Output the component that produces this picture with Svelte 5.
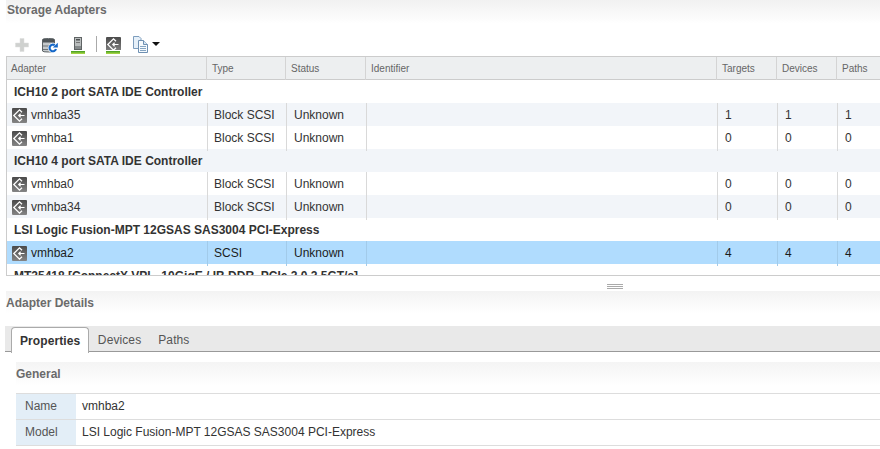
<script>
	const columns = [
		{ label: 'Adapter', width: 201 },
		{ label: 'Type', width: 79 },
		{ label: 'Status', width: 80 },
		{ label: 'Identifier', width: 351 },
		{ label: 'Targets', width: 60 },
		{ label: 'Devices', width: 60 },
		{ label: 'Paths', width: 60 }
	];

	const rows = [
		{ group: 'ICH10 2 port SATA IDE Controller' },
		{ name: 'vmhba35', type: 'Block SCSI', count: 1 },
		{ name: 'vmhba1', type: 'Block SCSI', count: 0 },
		{ group: 'ICH10 4 port SATA IDE Controller' },
		{ name: 'vmhba0', type: 'Block SCSI', count: 0 },
		{ name: 'vmhba34', type: 'Block SCSI', count: 0 },
		{ group: 'LSI Logic Fusion-MPT 12GSAS SAS3004 PCI-Express' },
		{ name: 'vmhba2', type: 'SCSI', count: 4, selected: true },
		{ group: 'MT25418 [ConnectX VPI - 10GigE / IB DDR, PCIe 2.0 2.5GT/s]' }
	];

	const tabs = ['Properties', 'Devices', 'Paths'];
	const gridColumns = columns.map((c) => c.width + 'px').join(' ');
	// header separators sit one pixel left of the row separators
	const headColumns = columns.map((c, i) => (i === 0 ? c.width - 1 : c.width) + 'px').join(' ');
</script>

{#snippet adapterIcon()}
	<svg class="adapter-icon" width="15" height="15" viewBox="0 0 15 15">
		<defs>
			<linearGradient id="chip" x1="0" y1="0" x2="0" y2="1">
				<stop offset="0" stop-color="#4a4a4a" />
				<stop offset="1" stop-color="#858585" />
			</linearGradient>
		</defs>
		<rect width="15" height="15" rx="1" fill="url(#chip)" />
		<path d="M10 4.200 L7.500 1.800 L1.800 7.500 L7.500 13.200 L10 10.800" fill="none" stroke="#fff" stroke-width="1.300" />
		<path d="M8.600 5.800 L6.800 7.500 L8.600 9.200 M7 7.500 H12.500" fill="none" stroke="#fff" stroke-width="1.200" />
	</svg>
{/snippet}

<div class="page">
	<h2 class="band">Storage Adapters</h2>

	<div class="toolbar">
		<svg class="plus" width="14" height="14" viewBox="0 0 14 14">
			<path d="M5 0.500h4v4.500h4.500v4h-4.500v4.500h-4v-4.500h-4.500v-4h4.500z" fill="#cfd1cf" stroke="#dcdedc" stroke-width="0.500" />
		</svg>
		<svg class="refresh" width="16" height="15" viewBox="0 0 16 15">
			<path d="M0.500 1.500 Q0.500 0.500 6.500 0.500 Q12.500 0.500 12.500 1.500 V13 Q12.500 14 6.500 14 Q0.500 14 0.500 13z" fill="#c4c8ca" stroke="#5c6265" />
			<rect x="1" y="1" width="11" height="3.500" fill="#4f5558" />
			<path d="M1 8h11M1 11.500h7" stroke="#6f7578" />
			<circle cx="11" cy="10" r="5" fill="#fff" />
			<path d="M14 11a3.300 3.300 0 1 1-1.300-3.800" fill="none" stroke="#1668c8" stroke-width="2.200" />
			<path d="M10.800 9.500h5v-4.800z" fill="#1668c8" />
		</svg>
		<span class="status-tool server">
			<svg width="8" height="13" viewBox="0 0 8 13">
				<rect x="0.500" y="0.500" width="7" height="12" fill="#b9bdbd" stroke="#5f6364" />
				<rect x="2" y="2" width="4" height="1.500" fill="#4d5152" />
				<rect x="2" y="5" width="4" height="1" fill="#777" />
				<rect x="1" y="9" width="6" height="3" fill="#858a8b" />
			</svg>
			<i class="green"></i>
		</span>
		<span class="divider"></span>
		<span class="status-tool chip">
			<span class="chip-box">{@render adapterIcon()}</span>
			<i class="green"></i>
		</span>
		<svg class="docs" width="15" height="17" viewBox="0 0 15 17">
			<path d="M0.500 0.500h5.500l2 2v10h-7.500z" fill="#e6f0f9" stroke="#7d9dbd" />
			<path d="M5.500 4.500h5l4 4v8h-9z" fill="#f6fafd" stroke="#6f90b2" />
			<path d="M10.500 4.500v4h4" fill="#d6e6f3" stroke="#6f90b2" />
			<path d="M7 10.500h6M7 12.500h6M7 14.500h6" stroke="#86a5c2" />
		</svg>
		<span class="caret"></span>
	</div>

	<div class="table">
		<div class="head" style="grid-template-columns: {headColumns}">
			{#each columns as col}
				<div class="head-cell">{col.label}</div>
			{/each}
		</div>

		{#each rows as row, i}
			{#if row.group}
				<div class="group" class:odd={i % 2 === 1}>{row.group}</div>
			{:else}
				<div class="row" class:odd={i % 2 === 1} class:selected={row.selected} style="grid-template-columns: {gridColumns}">
					<div class="cell adapter">
						{@render adapterIcon()}
						<span>{row.name}</span>
					</div>
					<div class="cell type">{row.type}</div>
					<div class="cell">Unknown</div>
					<div class="cell"></div>
					<div class="cell">{row.count}</div>
					<div class="cell">{row.count}</div>
					<div class="cell">{row.count}</div>
				</div>
			{/if}
		{/each}
	</div>

	<div class="splitter"><span class="grip"></span></div>

	<h2 class="band details">Adapter Details</h2>

	<div class="tabs">
		{#each tabs as tab, i}
			<div class="tab" class:active={i === 0}>{tab}</div>
		{/each}
	</div>

	<div class="general">
		<h3 class="band-small">General</h3>
		<dl class="props">
			<dt>Name</dt>
			<dd>vmhba2</dd>
			<dt>Model</dt>
			<dd>LSI Logic Fusion-MPT 12GSAS SAS3004 PCI-Express</dd>
		</dl>
	</div>
</div>

<style>
	:global(body) {
		margin: 0;
		background: #fff;
		overflow: hidden;
	}

	.page {
		width: 880px;
		height: 449px;
		overflow: hidden;
		font-family: 'Liberation Sans', Arial, sans-serif;
		font-size: 12px;
		color: #333;
	}

	.band {
		margin: 0 0 0 6px;
		height: 24px;
		padding-left: 1px;
		font-size: 12px;
		font-weight: bold;
		line-height: 21px;
		color: #6b6b6b;
		background: linear-gradient(#f1f1f1, #fff);
	}

	.toolbar {
		display: flex;
		align-items: flex-start;
		height: 32px;
		padding: 10px 0 0 15px;
		box-sizing: border-box;
	}

	.toolbar svg {
		display: block;
		flex: none;
	}

	.plus {
		margin-top: 4px;
	}

	.refresh {
		margin: 4px 0 0 13px;
	}

	.status-tool {
		display: flex;
		flex-direction: column;
		align-items: center;
		width: 14px;
		margin-top: 3px;
	}

	.status-tool.server {
		margin-left: 13px;
	}

	.status-tool.chip {
		margin-left: 9px;
	}

	.chip-box {
		height: 13px;
		overflow: hidden;
	}

	.green {
		display: block;
		width: 14px;
		height: 3px;
		margin-top: 1px;
		background: linear-gradient(#3d9a1c, #b5dc4b);
	}

	.divider {
		width: 1px;
		height: 16px;
		margin: 2px 0 0 11px;
		background: #aaa;
	}

	.docs {
		margin: 2px 0 0 13px;
	}

	.caret {
		width: 0;
		height: 0;
		margin: 8px 0 0 4px;
		border: 4px solid transparent;
		border-top-color: #111;
		border-bottom: 0;
	}

	.table {
		margin-left: 6px;
		height: 218px;
		overflow: hidden;
		border-left: 1px solid #ccc;
		border-top: 1px solid #ccc;
		border-bottom: 1px solid #ccc;
	}

	.head {
		display: grid;
		height: 22px;
		background: #edeff0;
		border-bottom: 1px solid #ccc;
	}

	.head-cell {
		padding-left: 5px;
		font-size: 10px;
		line-height: 23px;
		color: #666;
		border-right: 1px solid #d4d4d4;
	}

	.head-cell:first-child {
		padding-left: 4px;
	}

	.group {
		height: 23px;
		padding-left: 7px;
		font-weight: bold;
		line-height: 25px;
		color: #333;
		background: #fff;
	}

	.row {
		display: grid;
		height: 23px;
		background: #fff;
	}

	.group.odd,
	.row.odd {
		background: #f2f5f9;
	}

	.row.selected {
		background: #b0dcfe;
	}

	.cell {
		padding-left: 7px;
		line-height: 25px;
		white-space: nowrap;
		border-right: 1px solid #d9d9d9;
	}

	.cell.type {
		padding-left: 6px;
	}

	.selected .cell {
		color: #1c1c1c;
		border-right-color: #a2cbea;
	}

	.adapter {
		display: flex;
		align-items: center;
		gap: 4px;
		padding-left: 5px;
	}

	.splitter {
		height: 15px;
		padding-left: 607px;
	}

	.grip {
		display: block;
		width: 16px;
		height: 5px;
		padding-top: 8px;
		background: linear-gradient(#aaa, #aaa) 0 8px / 16px 1px no-repeat,
			linear-gradient(#aaa, #aaa) 0 10px / 16px 1px no-repeat,
			linear-gradient(#aaa, #aaa) 0 12px / 16px 1px no-repeat;
	}

	.details {
		height: 22px;
		padding-left: 0;
		line-height: 25px;
		background: linear-gradient(#f3f3f3, #fff);
	}

	.tabs {
		display: flex;
		height: 25px;
		margin: 13px 0 0 5px;
		padding-left: 6px;
		background: #e9e9e9;
		border-bottom: 1px solid #999;
	}

	.tab {
		padding: 0 8.500px;
		line-height: 28px;
		letter-spacing: 0.100px;
		color: #555;
	}

	.tab.active {
		height: 25px;
		margin-top: 1px;
		padding: 0 8px;
		font-weight: bold;
		line-height: 27px;
		color: #333;
		background: #fff;
		border: 1px solid #aaa;
		border-bottom: 0;
		border-radius: 4px 4px 0 0;
	}

	.general {
		padding: 10px 0 0 16px;
	}

	.band-small {
		margin: 0;
		height: 31px;
		font-size: 12px;
		font-weight: bold;
		line-height: 24px;
		color: #6b6b6b;
		background: linear-gradient(#f4f4f4, #fff 24px);
	}

	.props {
		display: grid;
		grid-template-columns: 60px 1fr;
		margin: 0;
		border-top: 1px solid #ddd;
	}

	.props dt {
		height: 25px;
		padding-left: 9px;
		line-height: 25px;
		color: #555;
		background: #e3eef7;
		border-bottom: 1px solid #ddd;
	}

	.props dd {
		height: 25px;
		margin: 0;
		padding-left: 6px;
		line-height: 25px;
		border-bottom: 1px solid #ddd;
	}
</style>
